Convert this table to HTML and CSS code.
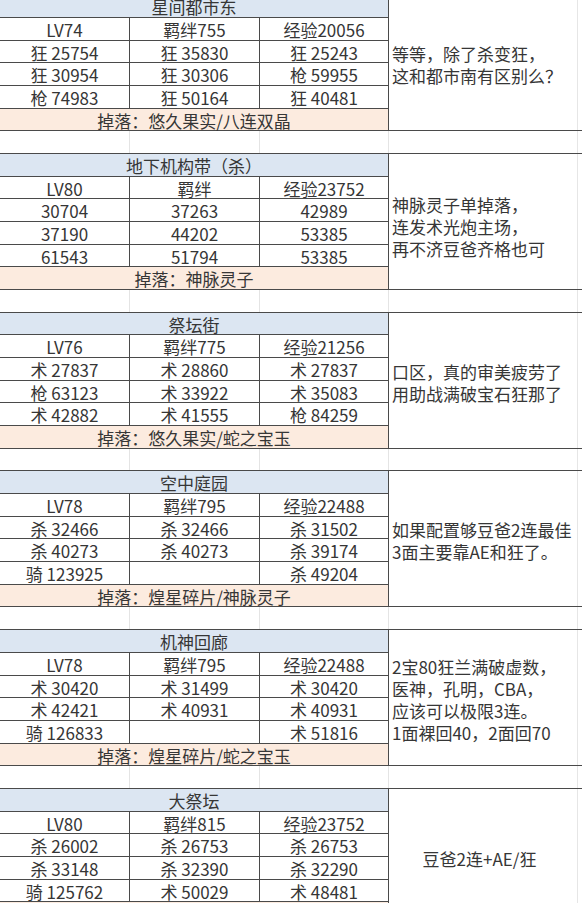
FILE: index.html
```html
<!DOCTYPE html>
<html lang="zh">
<head>
<meta charset="utf-8">
<title>关卡数据</title>
<link rel="stylesheet" href="styles.css">
</head>
<body>
<main class="sheet">
  <section class="block">
    <div class="title">星间都市东</div>
    <div class="c">LV74</div><div class="c">羁绊755</div><div class="c">经验20056</div>
    <div class="c">狂 25754</div><div class="c">狂 35830</div><div class="c">狂 25243</div>
    <div class="c">狂 30954</div><div class="c">狂 30306</div><div class="c">枪 59955</div>
    <div class="c">枪 74983</div><div class="c">狂 50164</div><div class="c">狂 40481</div>
    <div class="drop">掉落：悠久果实/八连双晶</div>
    <div class="note">等等，除了杀变狂，<br>这和都市南有区别么？</div>
  </section>

  <section class="block">
    <div class="title">地下机构带（杀）</div>
    <div class="c">LV80</div><div class="c">羁绊</div><div class="c">经验23752</div>
    <div class="c">30704</div><div class="c">37263</div><div class="c">42989</div>
    <div class="c">37190</div><div class="c">44202</div><div class="c">53385</div>
    <div class="c">61543</div><div class="c">51794</div><div class="c">53385</div>
    <div class="drop">掉落：神脉灵子</div>
    <div class="note note-low">神脉灵子单掉落，<br>连发术光炮主场，<br>再不济豆爸齐格也可</div>
  </section>

  <section class="block">
    <div class="title">祭坛街</div>
    <div class="c">LV76</div><div class="c">羁绊775</div><div class="c">经验21256</div>
    <div class="c">术 27837</div><div class="c">术 28860</div><div class="c">术 27837</div>
    <div class="c">枪 63123</div><div class="c">术 33922</div><div class="c">术 35083</div>
    <div class="c">术 42882</div><div class="c">术 41555</div><div class="c">枪 84259</div>
    <div class="drop">掉落：悠久果实/蛇之宝玉</div>
    <div class="note">口区，真的审美疲劳了<br>用助战满破宝石狂那了</div>
  </section>

  <section class="block">
    <div class="title">空中庭园</div>
    <div class="c">LV78</div><div class="c">羁绊795</div><div class="c">经验22488</div>
    <div class="c">杀 32466</div><div class="c">杀 32466</div><div class="c">杀 31502</div>
    <div class="c">杀 40273</div><div class="c">杀 40273</div><div class="c">杀 39174</div>
    <div class="c">骑 123925</div><div class="c"></div><div class="c">杀 49204</div>
    <div class="drop">掉落：煌星碎片/神脉灵子</div>
    <div class="note">如果配置够豆爸2连最佳<br>3面主要靠AE和狂了。</div>
  </section>

  <section class="block">
    <div class="title">机神回廊</div>
    <div class="c">LV78</div><div class="c">羁绊795</div><div class="c">经验22488</div>
    <div class="c">术 30420</div><div class="c">术 31499</div><div class="c">术 30420</div>
    <div class="c">术 42421</div><div class="c">术 40931</div><div class="c">术 40931</div>
    <div class="c">骑 126833</div><div class="c"></div><div class="c">术 51816</div>
    <div class="drop">掉落：煌星碎片/蛇之宝玉</div>
    <div class="note">2宝80狂兰满破虚数，<br>医神，孔明，CBA，<br>应该可以极限3连。<br>1面裸回40，2面回70</div>
  </section>

  <section class="block">
    <div class="title">大祭坛</div>
    <div class="c">LV80</div><div class="c">羁绊815</div><div class="c">经验23752</div>
    <div class="c">杀 26002</div><div class="c">杀 26753</div><div class="c">杀 26753</div>
    <div class="c">杀 33148</div><div class="c">杀 32390</div><div class="c">杀 32290</div>
    <div class="c">骑 125762</div><div class="c">术 50029</div><div class="c">术 48481</div>
    <div class="drop"></div>
    <div class="note note-center">豆爸2连+AE/狂</div>
  </section>
</main>
</body>
</html>
```

FILE: styles.css
```css
* {
  box-sizing: border-box;
}

html, body {
  margin: 0;
  padding: 0;
  height: 100%;
  overflow: hidden;
}

body {
  font-family: "Noto Sans CJK SC", "Noto Sans", sans-serif;
  font-size: 17px;
  color: #363636;
  background-color: #ffffff;
  background-image: linear-gradient(to right,
    transparent 0, transparent 129px,
    #e4e4e4 129px, #e4e4e4 130px,
    transparent 130px, transparent 259px,
    #e4e4e4 259px, #e4e4e4 260px,
    transparent 260px, transparent 388px,
    #e4e4e4 388px, #e4e4e4 389px,
    transparent 389px, transparent 577px,
    #e6e6e6 577px, #e6e6e6 578px,
    transparent 578px);
}

.sheet {
  display: flex;
  flex-direction: column;
  gap: 21.72px;
  margin-top: -5.8px;
  width: 582px;
}

.block {
  display: grid;
  grid-template-columns: 130px 130px 129px 1fr;
  grid-template-rows: repeat(6, 22.68px);
  border-top: 1px solid #4a4a4a;
}

.title,
.c,
.drop {
  border-bottom: 1px solid #4a4a4a;
  text-align: center;
  white-space: nowrap;
  line-height: 20px;
  padding-top: 2px;
  overflow: visible;
}

.title {
  grid-column: 1 / 4;
  background: #dce6f2;
  border-right: 1px solid #4a4a4a;
}

.c {
  background: #ffffff;
  border-right: 1px solid #4a4a4a;
}

.drop {
  grid-column: 1 / 4;
  background: #fcebdf;
  border-right: 1px solid #4a4a4a;
}

.note {
  grid-column: 4;
  grid-row: 1 / 7;
  border-bottom: 1px solid #4a4a4a;
  display: flex;
  align-items: center;
  padding: 5px 0 0 3px;
  line-height: 22px;
  white-space: nowrap;
}

.note-low {
  padding-top: 12px;
}

.note-center {
  justify-content: center;
  padding-left: 0;
  padding-right: 12px;
}
```
